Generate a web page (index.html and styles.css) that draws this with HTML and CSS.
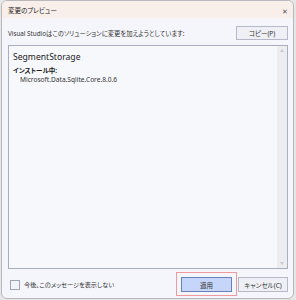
FILE: index.html
```html
<!DOCTYPE html>
<html>
	<head>
		<meta charset="UTF-8">
		<title>変更のプレビュー</title>
		<link rel="stylesheet" href="styles.css">
	</head>
	<body>
		<div class="dlg">
			<div class="titlebar">
				<span class="title">変更のプレビュー</span>
				<span class="close">✕</span>
			</div>
			<div class="body">
				<div class="top">
					<span class="msg">Visual Studioはこのソリューションに変更を加えようとしています:</span>
					<a href="javascript:;" class="btn copy">コピー(P)</a>
				</div>
				<div class="box">
					<div class="list">
						<div class="proj">SegmentStorage</div>
						<div class="head">インストール中:</div>
						<div class="pkg">Microsoft.Data.Sqlite.Core.8.0.6</div>
					</div>
					<div class="scroll">
						<span class="arr up"></span>
						<span class="arr down"></span>
					</div>
				</div>
				<div class="bottom">
					<label class="chk"><span class="box2"></span>今後、このメッセージを表示しない</label>
					<div class="btns">
						<span class="mark"><a href="javascript:;" class="btn apply">適用</a></span>
						<a href="javascript:;" class="btn cancel">キャンセル(C)</a>
					</div>
				</div>
			</div>
		</div>
	</body>
</html>
```
FILE: styles.css
```css
*{
	margin: 0;
	padding: 0;
	box-sizing: border-box;
}
body{
	width: 296px;
	height: 300px;
	background: #e6e6e6;
	font-family: "Noto Sans", "Noto Sans CJK JP", sans-serif;
	font-feature-settings: "palt";
	color: #1b1b1b;
	overflow: hidden;
}
.dlg{
	width: 293px;
	height: 299px;
	margin-left: 1px;
	border: 1px solid #b9b9bd;
	border-radius: 6px;
	background: #f5f6fb;
	overflow: hidden;
}
.titlebar{
	height: 17px;
	background: #f8eeea;
	display: flex;
	align-items: center;
	justify-content: space-between;
	padding: 0 5px 0 6px;
}
.title{
	font-size: 6.5px;
	line-height: 8px;
	margin-top: 2px;
	color: #222;
}
.close{
	font-size: 7px;
	color: #555;
	margin-top: 3px;
}
.body{
	padding: 8px 5px 2px 6px;
}
.top{
	display: flex;
	align-items: center;
	justify-content: space-between;
	height: 14px;
}
.msg{
	font-size: 6.3px;
	color: #333;
	white-space: nowrap;
	margin-top: 1px;
}
.btn{
	display: flex;
	align-items: center;
	justify-content: center;
	width: 51px;
	height: 15px;
	border: 1px solid #b6bac8;
	background: #eff0f5;
	font-size: 6.5px;
	color: #333;
	text-decoration: none;
}
.copy{
	width: 52px;
	height: 14px;
}
.box{
	margin-top: 5px;
	height: 224px;
	border: 1px solid #a9aebd;
	background: #f7f8fc;
	display: flex;
}
.list{
	flex: 1;
	padding: 5px 0 0 4px;
}
.proj{
	font-size: 8.6px;
	line-height: 12px;
	color: #222;
}
.head{
	font-size: 6.5px;
	font-weight: bold;
	margin-top: 3px;
	line-height: 9px;
}
.pkg{
	font-size: 6.6px;
	line-height: 10px;
	padding-left: 7px;
	color: #333;
}
.scroll{
	width: 10px;
	background: #ececf1;
	display: flex;
	flex-direction: column;
	justify-content: space-between;
	align-items: center;
	padding: 3px 0;
}
.arr{
	width: 0;
	height: 0;
	border-left: 2.5px solid transparent;
	border-right: 2.5px solid transparent;
}
.up{
	border-bottom: 3px solid #c9c9ce;
}
.down{
	border-top: 3px solid #c9c9ce;
}
.bottom{
	margin-top: 3px;
	height: 24px;
	display: flex;
	align-items: center;
	justify-content: space-between;
}
.chk{
	display: flex;
	align-items: center;
	font-size: 6.2px;
	color: #333;
	margin-top: 1px;
}
.box2{
	width: 10px;
	height: 10px;
	border: 1px solid #a0a6b4;
	background: #f1f3fa;
	margin: 0 4px 0 2px;
}
.btns{
	display: flex;
	align-items: center;
}
.mark{
	display: block;
	padding: 4px 4px 3px;
	border: 1.5px solid #f09aa0;
}
.apply{
	background: #c6d5fa;
	border: 1px solid #6a80b8;
}
.cancel{
	width: 50px;
	margin-left: 1px;
	margin-top: 1px;
}
```
